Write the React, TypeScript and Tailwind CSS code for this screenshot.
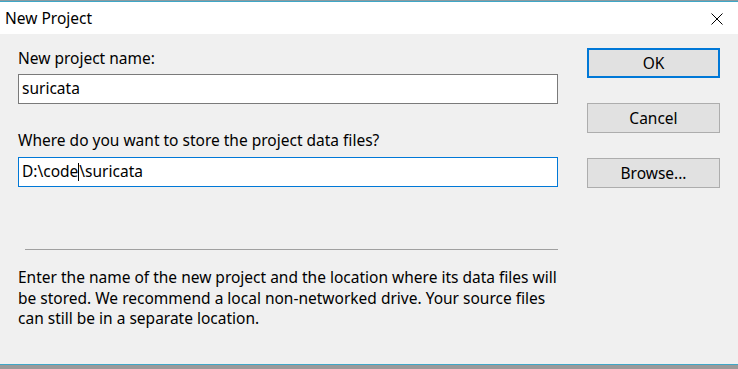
import React from 'react'

const font = { fontFamily: '"Noto Sans", "Open Sans", sans-serif' }

function DialogButton({ label, primary }: { label: string; primary?: boolean }) {
  return (
    <button
      className={
        primary
          ? 'h-[30px] w-[133px] border-2 border-[#0078d7] bg-[#e1e1e1] pt-[2px] text-[15.5px] leading-none text-black'
          : 'h-[30px] w-[133px] border border-[#adadad] bg-[#e1e1e1] pt-[2px] text-[15.5px] leading-none text-black'
      }
    >
      {label}
    </button>
  )
}

export default function App() {
  return (
    <div className="flex h-[369px] w-[738px] flex-col bg-[#f0f0f0] text-black" style={font}>
      {/* Title bar */}
      <div className="h-[2px] border-t border-[#8a9aa0] bg-[#3fa7c7]" />
      <div className="flex h-[32px] items-center justify-between bg-white pl-[5px] pr-[14px] pt-[1px]">
        <span className="text-[15.5px]">New Project</span>
        <svg width="12" height="12" viewBox="0 0 12 12" className="mr-[1px]">
          <path d="M0.5 0.5L11.5 11.5M11.5 0.5L0.5 11.5" stroke="#000" strokeWidth="1" />
        </svg>
      </div>

      {/* Body */}
      <div className="flex flex-1 pl-[18px]">
        <div className="flex w-[540px] flex-col pt-[14px]">
          <label className="text-[15.5px] leading-[20px]">New project name:</label>
          <div className="mt-[6px] flex h-[30px] items-center border border-[#7a7a7a] bg-white px-[3px] text-[15.5px]">
            suricata
          </div>
          <label className="mt-[26px] text-[15.5px] leading-[20px]">
            Where do you want to store the project data files?
          </label>
          <div className="mt-[7px] flex h-[30px] items-center border border-[#0078d7] bg-white px-[3px] text-[15.5px]">
            <span>D:\code</span>
            <span className="h-[18px] w-px bg-black" />
            <span>\suricata</span>
          </div>
          <div className="ml-[7px] mt-[62px] h-px bg-[#a0a0a0]" />
          <p className="mt-[17px] whitespace-nowrap text-[15.5px] leading-[20.5px]">
            Enter the name of the new project and the location where its data files will
            <br />
            be stored. We recommend a local non-networked drive. Your source files
            <br />
            can still be in a separate location.
          </p>
        </div>
        <div className="ml-[29px] flex flex-col gap-[25px] pt-[14px]">
          <DialogButton label="OK" primary />
          <DialogButton label="Cancel" />
          <DialogButton label="Browse..." />
        </div>
      </div>

      <div className="h-px bg-[#3fa7c7]" />
      <div className="h-[4px] bg-[#9a9a9a]" />
    </div>
  )
}
